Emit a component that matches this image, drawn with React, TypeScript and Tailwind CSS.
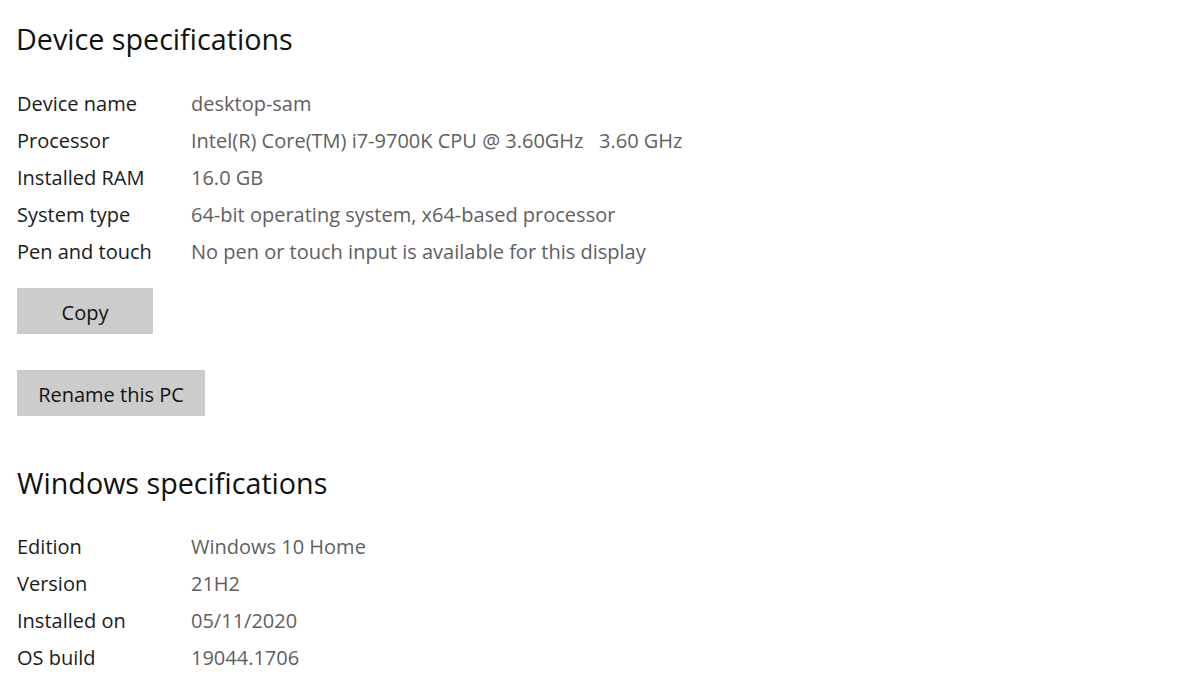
const deviceSpecs: [string, string][] = [
  ["Device name", "desktop-sam"],
  ["Processor", "Intel(R) Core(TM) i7-9700K CPU @ 3.60GHz   3.60 GHz"],
  ["Installed RAM", "16.0 GB"],
  ["System type", "64-bit operating system, x64-based processor"],
  ["Pen and touch", "No pen or touch input is available for this display"],
];

const windowsSpecs: [string, string][] = [
  ["Edition", "Windows 10 Home"],
  ["Version", "21H2"],
  ["Installed on", "05/11/2020"],
  ["OS build", "19044.1706"],
];

function SpecRows({ rows }: { rows: [string, string][] }) {
  return (
    <div className="flex flex-col">
      {rows.map(([label, value]) => (
        <div key={label} className="flex h-[37px] items-center text-[20px]">
          <span className="w-[174px] shrink-0 text-[#1b1b1b]">{label}</span>
          <span className="whitespace-pre text-[#5f5f5f]">{value}</span>
        </div>
      ))}
    </div>
  );
}

export default function App() {
  return (
    <div
      className="min-h-[675px] bg-white pl-[17px] pt-[19px]"
      style={{ fontFamily: '"Segoe UI", "Open Sans", "Noto Sans", sans-serif' }}
    >
      <h1 className="-ml-[1px] h-[40px] text-[28.7px] leading-[40px] font-normal text-[#111]">Device specifications</h1>
      <div className="mt-[26px]">
        <SpecRows rows={deviceSpecs} />
      </div>
      <button className="mt-[18px] flex h-[46px] w-[136px] items-center justify-center bg-[#cccccc] pt-[4px] text-[20px] text-[#111]">
        Copy
      </button>
      <button className="mt-[36px] flex h-[46px] w-[188px] items-center justify-center bg-[#cccccc] pt-[4px] text-[20px] text-[#111]">
        Rename this PC
      </button>
      <h2 className="mt-[47px] h-[40px] text-[28.7px] leading-[40px] font-normal text-[#111]">Windows specifications</h2>
      <div className="mt-[25px]">
        <SpecRows rows={windowsSpecs} />
      </div>
    </div>
  );
}
